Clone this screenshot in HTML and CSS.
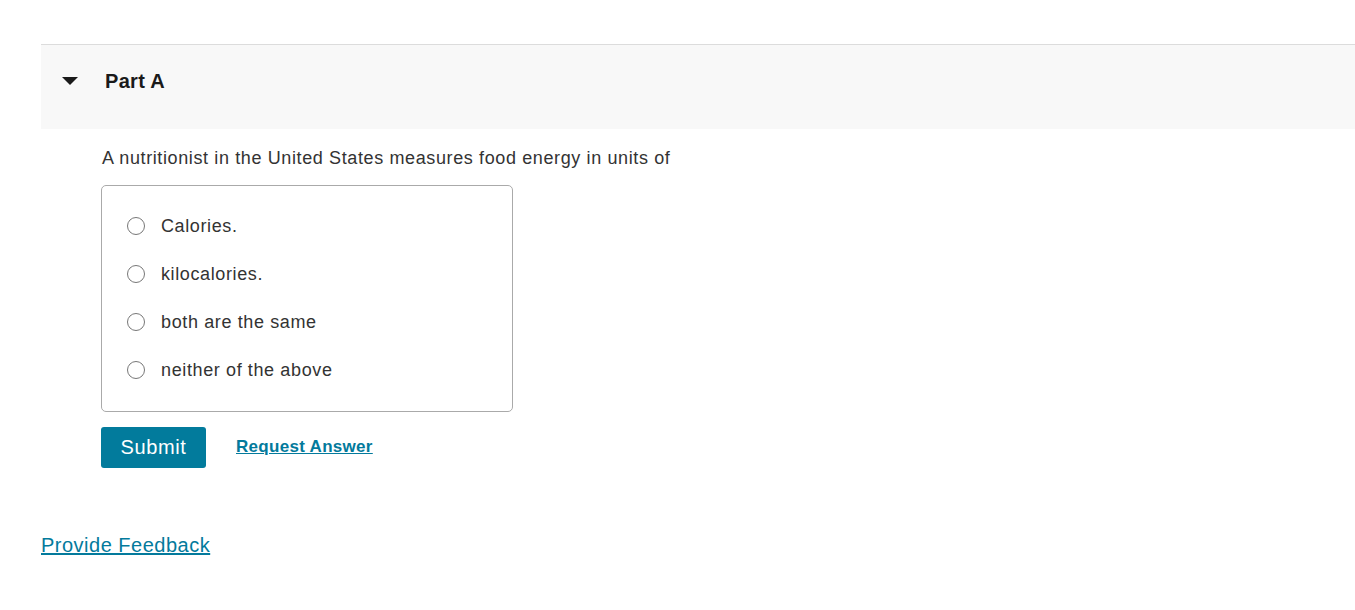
FILE: index.html
```html
<!DOCTYPE html>
<html>
<head>
<meta charset="utf-8">
<link rel="stylesheet" href="styles.css">
</head>
<body>
<div class="page">
  <div class="part-header">
    <span class="caret"></span>
    <h2 class="part-title">Part A</h2>
  </div>
  <div class="part-body">
    <p class="question">A nutritionist in the United States measures food energy in units of</p>
    <div class="choices">
      <label class="choice"><span class="radio"></span><span class="choice-text">Calories.</span></label>
      <label class="choice"><span class="radio"></span><span class="choice-text">kilocalories.</span></label>
      <label class="choice"><span class="radio"></span><span class="choice-text">both are the same</span></label>
      <label class="choice"><span class="radio"></span><span class="choice-text">neither of the above</span></label>
    </div>
    <div class="actions">
      <button class="submit">Submit</button>
      <a class="request" href="#">Request Answer</a>
    </div>
  </div>
  <a class="feedback" href="#">Provide Feedback</a>
</div>
</body>
</html>
```
FILE: styles.css
```css
html, body { margin: 0; padding: 0; background: #fff; }
body { font-family: "Liberation Sans", Arial, sans-serif; color: #333; }
.page { padding: 44px 0 0 41px; }
.part-header {
  border-top: 1px solid #dcdcdc;
  background: #f8f8f8;
  height: 85px;
  box-sizing: border-box;
  display: flex;
  align-items: center;
  padding-left: 21px;
  padding-bottom: 12px;
}
.caret {
  width: 0; height: 0;
  border-left: 8px solid transparent;
  border-right: 8px solid transparent;
  border-top: 8px solid #1a1a1a;
}
.part-title {
  margin: 0 0 0 27px;
  font-size: 20px;
  font-weight: bold;
  color: #1a1a1a;
  line-height: 24px;
  letter-spacing: 0.3px;
}
.part-body { padding-left: 60px; }
.question {
  margin: 17px 0 15px 1px;
  font-size: 18px;
  line-height: 24px;
  color: #333;
  letter-spacing: 0.62px;
}
.choices {
  width: 410px;
  border: 1px solid #aaa;
  border-radius: 5px;
  padding: 16px 0 17px;
}
.choice {
  display: flex;
  align-items: center;
  height: 48px;
  padding-left: 25px;
}
.radio {
  width: 16px; height: 16px;
  border: 1.5px solid #777;
  border-radius: 50%;
  flex: none;
}
.choice-text {
  margin-left: 16px;
  font-size: 18px;
  color: #333;
  letter-spacing: 0.62px;
}
.actions {
  display: flex;
  align-items: center;
  margin-top: 15px;
}
.submit {
  width: 105px;
  height: 41px;
  background: #027b9c;
  color: #fff;
  border: none;
  border-radius: 3px;
  font-family: "Liberation Sans", Arial, sans-serif;
  font-size: 20px;
  letter-spacing: 0.6px;
  padding: 0;
}
.request {
  margin-left: 30px;
  font-size: 17px;
  font-weight: bold;
  color: #037a9c;
  text-decoration: underline;
  letter-spacing: 0.3px;
  margin-top: -1px;
}
.feedback {
  display: inline-block;
  margin-top: 65px;
  font-size: 20px;
  line-height: 24px;
  color: #037a9c;
  text-decoration: underline;
  letter-spacing: 0.5px;
}
```
